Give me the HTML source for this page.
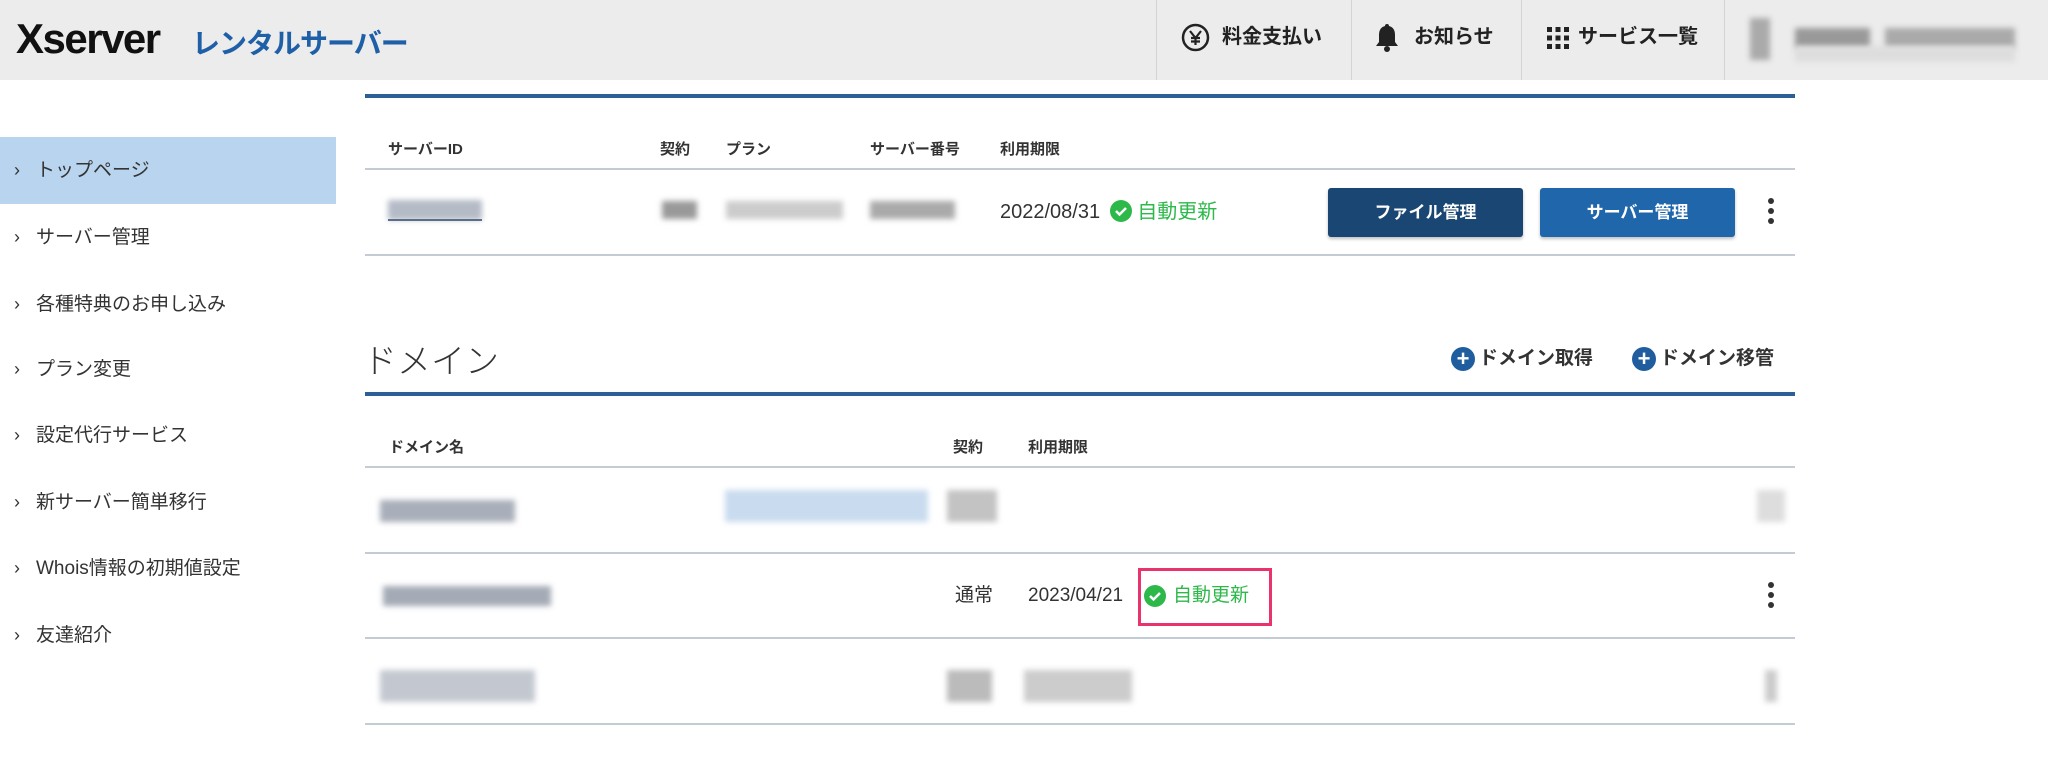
<!DOCTYPE html>
<html><head><meta charset="utf-8">
<style>
*{margin:0;padding:0;box-sizing:border-box}
body{width:2048px;height:767px;background:#fff;position:relative;overflow:hidden;font-family:"Liberation Sans","Noto Sans CJK JP",sans-serif;color:#333}
.a{position:absolute;white-space:nowrap}
.hdr{position:absolute;left:0;top:0;width:2048px;height:80px;background:#ececec}
.sep{position:absolute;top:0;width:1px;height:80px;background:#d4d4d4}
.nav{font-size:20px;font-weight:bold;color:#222;top:24px;line-height:26px}
.side{left:14px;font-size:19px;color:#333;line-height:24px}
.side span{display:inline-block;width:22px;font-size:18px}
.th{font-size:15px;font-weight:bold;color:#333;line-height:20px}
.line{position:absolute;left:365px;width:1430px;height:2px;background:#c3ccd5}
.blue{position:absolute;left:365px;width:1430px;height:4px;background:#2c5f96}
.blur{position:absolute;filter:blur(3px)}
.chk{display:inline-block;width:22px;height:22px;border-radius:50%;background:#2db84a;vertical-align:middle;position:relative}
.green{color:#2db84a;font-size:20px}
.btn{position:absolute;top:188px;height:49px;width:195px;color:#fff;font-size:17px;font-weight:bold;text-align:center;line-height:49px;border-radius:3px;box-shadow:0 2px 3px rgba(0,0,0,.25)}
.keb{position:absolute;width:6px}
.keb i{display:block;width:6px;height:6px;border-radius:50%;background:#333;margin-bottom:4px}
.plus{display:inline-block;width:24px;height:24px;border-radius:50%;background:#1f5d9e;color:#fff;text-align:center;line-height:23px;font-size:22px;font-weight:bold;vertical-align:middle;margin-right:4px}
</style></head><body>
<div class="hdr"></div>
<div class="a" style="left:16px;top:15px;font-size:42px;line-height:48px;font-weight:bold;letter-spacing:-1.5px;color:#111">Xserver</div>
<div class="a" style="left:192px;top:22px;font-size:28px;font-weight:bold;color:#1e5fa8;letter-spacing:-1px">レンタルサーバー</div>
<div class="sep" style="left:1156px"></div><div class="sep" style="left:1351px"></div><div class="sep" style="left:1521px"></div><div class="sep" style="left:1724px"></div>
<svg class="a" style="left:1181px;top:23px" width="29" height="29" viewBox="0 0 29 29"><circle cx="14.5" cy="14.5" r="12.5" fill="none" stroke="#222" stroke-width="2.5"/><path d="M9 8l5.5 7 5.5-7M14.5 15v7M10 15h9M10 18.5h9" stroke="#222" stroke-width="2.2" fill="none"/></svg>
<div class="a nav" style="left:1222px">料金支払い</div>
<svg class="a" style="left:1374px;top:23px" width="26" height="30" viewBox="0 0 26 30"><path d="M13 1c1.5 0 2 1 2 2 4 1 6 4 6 9v7l3 4H2l3-4v-7c0-5 2-8 6-9 0-1 .5-2 2-2z" fill="#222"/><circle cx="13" cy="26" r="3" fill="#222"/></svg>
<div class="a nav" style="left:1414px">お知らせ</div>
<svg class="a" style="left:1547px;top:27px" width="22" height="22" viewBox="0 0 22 22" fill="#222"><rect x="0" y="0" width="5" height="5"/><rect x="8.5" y="0" width="5" height="5"/><rect x="17" y="0" width="5" height="5"/><rect x="0" y="8.5" width="5" height="5"/><rect x="8.5" y="8.5" width="5" height="5"/><rect x="17" y="8.5" width="5" height="5"/><rect x="0" y="17" width="5" height="5"/><rect x="8.5" y="17" width="5" height="5"/><rect x="17" y="17" width="5" height="5"/></svg>
<div class="a nav" style="left:1578px">サービス一覧</div>
<div class="blur" style="left:1750px;top:18px;width:20px;height:42px;background:#aaa"></div>
<div class="blur" style="left:1795px;top:28px;width:75px;height:20px;background:#999"></div>
<div class="blur" style="left:1885px;top:28px;width:130px;height:20px;background:#aaa"></div>
<div class="blur" style="left:1795px;top:46px;width:220px;height:16px;background:#ddd"></div>

<div class="a" style="left:0;top:137px;width:336px;height:67px;background:#b8d4ee"></div>
<div class="a side" style="top:158px"><span>›</span>トップページ</div>
<div class="a side" style="top:225px"><span>›</span>サーバー管理</div>
<div class="a side" style="top:292px"><span>›</span>各種特典のお申し込み</div>
<div class="a side" style="top:357px"><span>›</span>プラン変更</div>
<div class="a side" style="top:423px"><span>›</span>設定代行サービス</div>
<div class="a side" style="top:490px"><span>›</span>新サーバー簡単移行</div>
<div class="a side" style="top:556px"><span>›</span>Whois情報の初期値設定</div>
<div class="a side" style="top:623px"><span>›</span>友達紹介</div>

<div class="blue" style="top:94px"></div>
<div class="a th" style="left:388px;top:140px">サーバーID</div>
<div class="a th" style="left:660px;top:140px">契約</div>
<div class="a th" style="left:726px;top:140px">プラン</div>
<div class="a th" style="left:870px;top:140px">サーバー番号</div>
<div class="a th" style="left:1000px;top:140px">利用期限</div>
<div class="line" style="top:168px"></div>
<div class="blur" style="left:388px;top:200px;width:94px;height:20px;background:#b4bac6"></div>
<div class="a" style="left:388px;top:219px;width:94px;height:2px;background:#5a6e8a"></div>
<div class="blur" style="left:662px;top:201px;width:35px;height:18px;background:#999"></div>
<div class="blur" style="left:726px;top:201px;width:117px;height:18px;background:#ccc"></div>
<div class="blur" style="left:870px;top:201px;width:85px;height:18px;background:#aaa"></div>
<div class="a" style="left:1000px;top:199px;font-size:20px;line-height:26px">2022/08/31 <span class="chk" style="margin-left:4px;top:-2px"><svg width="22" height="22"><path d="M6 11l3.5 3.5L16 8" stroke="#fff" stroke-width="2.5" fill="none"/></svg></span> <span class="green">自動更新</span></div>
<div class="btn" style="left:1328px;background:#1a4673">ファイル管理</div>
<div class="btn" style="left:1540px;background:#2066ab">サーバー管理</div>
<div class="keb" style="left:1768px;top:198px"><i></i><i></i><i></i></div>
<div class="line" style="top:254px"></div>

<div class="a" style="left:363px;top:334px;font-size:34px;font-weight:300;color:#333">ドメイン</div>
<div class="a" style="left:1451px;top:343px;font-size:19px;font-weight:bold;color:#333"><span class="plus">+</span>ドメイン取得</div>
<div class="a" style="left:1632px;top:343px;font-size:19px;font-weight:bold;color:#333"><span class="plus">+</span>ドメイン移管</div>
<div class="blue" style="top:392px"></div>

<div class="a th" style="left:389px;top:438px">ドメイン名</div>
<div class="a th" style="left:953px;top:438px">契約</div>
<div class="a th" style="left:1028px;top:438px">利用期限</div>
<div class="line" style="top:466px"></div>
<div class="blur" style="left:380px;top:500px;width:135px;height:22px;background:#a9afba"></div>
<div class="blur" style="left:725px;top:490px;width:203px;height:32px;background:#c9dbef"></div>
<div class="blur" style="left:947px;top:490px;width:50px;height:32px;background:#c3c3c3"></div>
<div class="blur" style="left:1757px;top:490px;width:28px;height:32px;background:#ddd"></div>
<div class="line" style="top:552px"></div>
<div class="blur" style="left:383px;top:586px;width:168px;height:20px;background:#a4abb6"></div>
<div class="a" style="left:955px;top:583px;font-size:19px;line-height:26px">通常</div>
<div class="a" style="left:1028px;top:583px;font-size:19px;line-height:26px">2023/04/21</div>
<span class="chk a" style="left:1144px;top:585px"><svg width="22" height="22"><path d="M6 11l3.5 3.5L16 8" stroke="#fff" stroke-width="2.5" fill="none"/></svg></span>
<div class="a green" style="left:1173px;top:583px;font-size:19px;line-height:26px">自動更新</div>
<div class="a" style="left:1138px;top:568px;width:134px;height:58px;border:3px solid #e8336d"></div>
<div class="keb" style="left:1768px;top:582px"><i></i><i></i><i></i></div>
<div class="line" style="top:637px"></div>
<div class="blur" style="left:380px;top:670px;width:155px;height:32px;background:#c3c8d0"></div>
<div class="blur" style="left:947px;top:670px;width:45px;height:32px;background:#bbb"></div>
<div class="blur" style="left:1024px;top:670px;width:108px;height:32px;background:#ccc"></div>
<div class="blur" style="left:1765px;top:670px;width:12px;height:32px;background:#ccc"></div>
<div class="line" style="top:723px"></div>
</body></html>
